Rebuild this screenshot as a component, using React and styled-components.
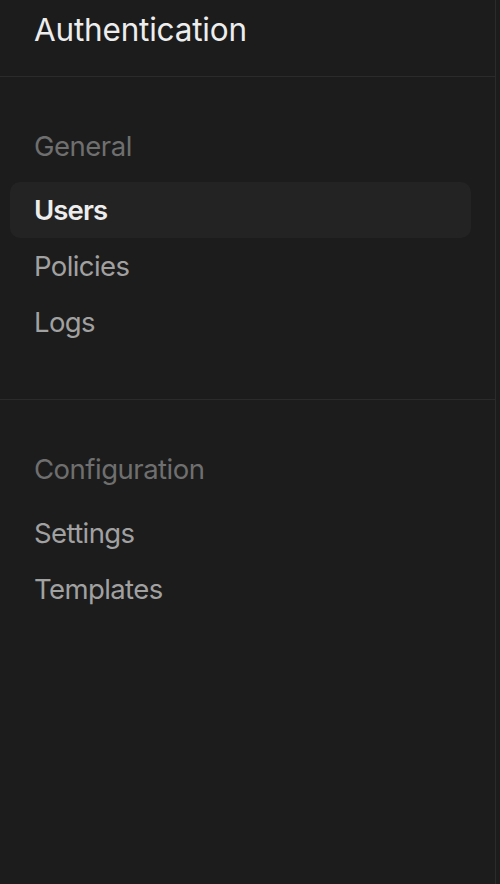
import React from "react";
import styled, { createGlobalStyle } from "styled-components";

const GlobalStyle = createGlobalStyle`
  html, body {
    margin: 0;
    padding: 0;
    background: #1c1c1c;
  }
  body {
    font-family: "Inter", "Liberation Sans", sans-serif;
    -webkit-font-smoothing: antialiased;
  }
`;

const sections = [
  { title: "General", items: ["Users", "Policies", "Logs"] },
  { title: "Configuration", items: ["Settings", "Templates"] },
];

const App = () => {
  const active = "Users";
  return (
    <>
      <GlobalStyle />
      <Sidebar>
        <Header>
          <Title>Authentication</Title>
        </Header>
        {sections.map((section) => (
          <Section key={section.title}>
            <Label>{section.title}</Label>
            <List>
              {section.items.map((item) => (
                <Item key={item} active={item === active ? 1 : 0}>
                  {item}
                </Item>
              ))}
            </List>
          </Section>
        ))}
      </Sidebar>
    </>
  );
};

const Sidebar = styled.nav`
  width: 496px;
  min-height: 884px;
  box-sizing: border-box;
  border-right: 1px solid #2b2b2b;
  background-color: #1c1c1c;
  display: flex;
  flex-direction: column;
`;

const Header = styled.div`
  height: 77px;
  box-sizing: border-box;
  padding: 10px 34px 0;
  border-bottom: 1px solid #2b2b2b;
`;

const Title = styled.h1`
  margin: 0;
  font-size: 31.5px;
  line-height: 40px;
  font-weight: 400;
  letter-spacing: -0.2px;
  color: #ededed;
`;

const Section = styled.div`
  padding: 41px 24px 49px 10px;
  border-bottom: 1px solid #2b2b2b;

  &:last-child {
    border-bottom: none;
  }
`;

const Label = styled.div`
  padding-left: 24px;
  height: 56px;
  line-height: 56px;
  font-size: 27.5px;
  letter-spacing: -0.5px;
  color: #6f6f6f;
  margin-bottom: 8px;
`;

const List = styled.ul`
  list-style: none;
  margin: 0;
  padding: 0;
`;

const Item = styled.li`
  height: 56px;
  line-height: 56px;
  padding-left: 24px;
  border-radius: 10px;
  font-size: 27.5px;
  letter-spacing: ${({ active }) => (active ? "-0.9px" : "-0.6px")};
  font-weight: ${({ active }) => (active ? 600 : 400)};
  color: ${({ active }) => (active ? "#ededed" : "#a1a1a1")};
  background-color: ${({ active }) => (active ? "#232323" : "transparent")};
`;

export default App;
